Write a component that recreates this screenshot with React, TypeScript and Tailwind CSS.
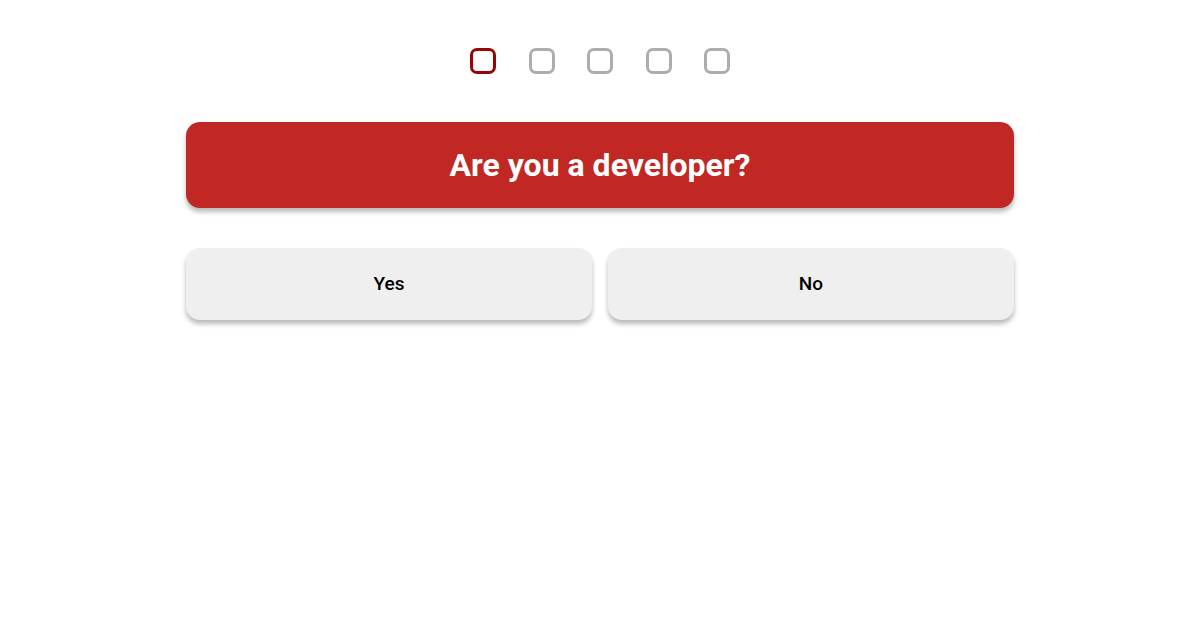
export default function App() {
  const steps = [0, 1, 2, 3, 4]
  const current = 0

  return (
    <div className="min-h-[630px] w-full bg-white font-['Roboto',sans-serif]">
      <div className="mx-auto w-[828px] pt-[48px]">
        {/* progress */}
        <div className="flex justify-center gap-[32.5px]">
          {steps.map((s) => (
            <div
              key={s}
              className={
                s === current
                  ? 'h-[26px] w-[26px] rounded-[7px] border-[3px] border-[#990505]'
                  : 'h-[26px] w-[26px] rounded-[7px] border-[3px] border-[#adadad]'
              }
            />
          ))}
        </div>

        {/* question */}
        <div className="mt-[48px] flex h-[86px] items-center justify-center rounded-[14px] bg-[#c12824] shadow-[0_4px_5px_rgba(0,0,0,0.28)]">
          <h1 className="text-[32px] font-bold text-white">Are you a developer?</h1>
        </div>

        {/* answers */}
        <div className="mt-[40px] grid grid-cols-2 gap-[16px]">
          {['Yes', 'No'].map((a) => (
            <button
              key={a}
              className="flex h-[72px] items-center justify-center rounded-[14px] bg-[#efefef] text-[19px] font-medium text-black shadow-[0_4px_5px_rgba(0,0,0,0.28)]"
            >
              {a}
            </button>
          ))}
        </div>
      </div>
    </div>
  )
}
